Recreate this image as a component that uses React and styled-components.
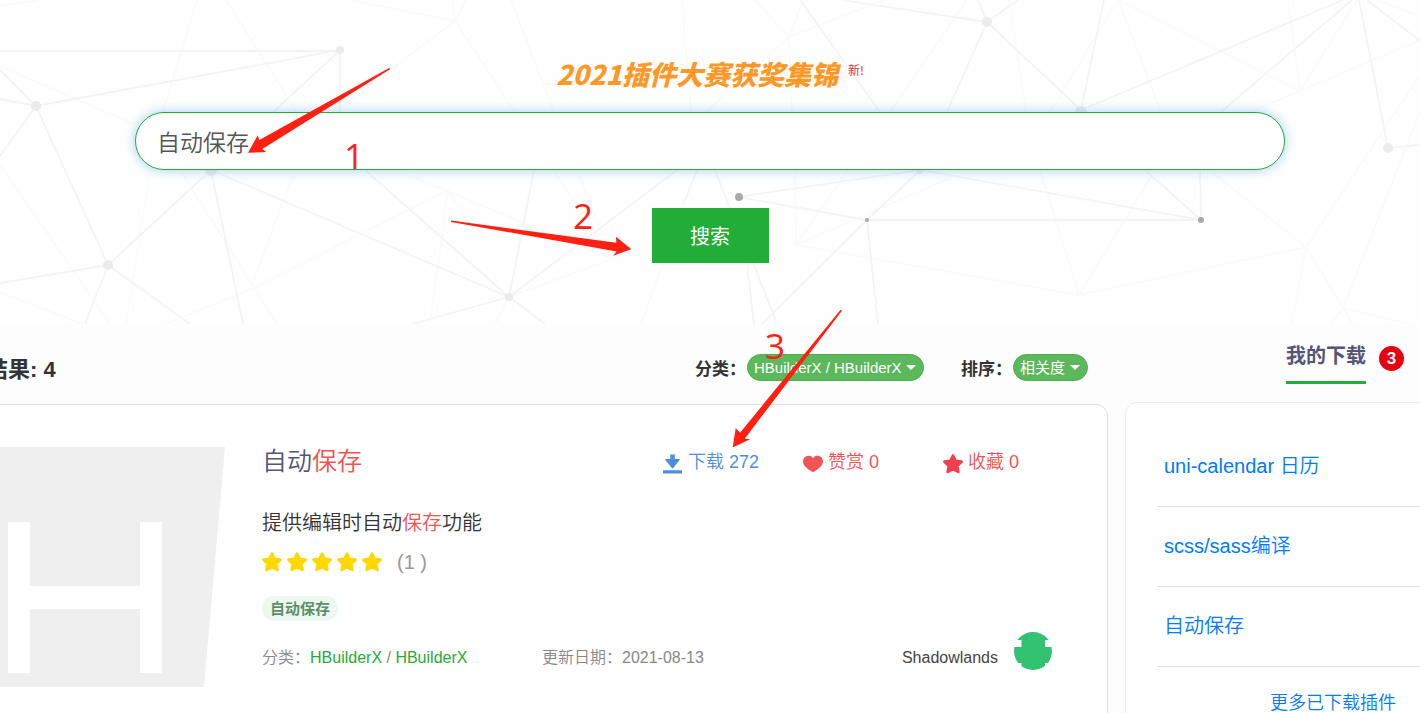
import { useState } from 'react'
import styled, { createGlobalStyle } from 'styled-components'


const GlobalStyle = createGlobalStyle`
  * {
    box-sizing: border-box;
  }

  body {
    margin: 0;
    background-color: #fdfdfd;
    color: #333333;
    font-family: "Liberation Sans", "Noto Sans CJK SC", sans-serif;
    font-size: 16px;
  }

  a {
    text-decoration: none;
  }
`

const Page = styled.div`
  position: relative;
  max-height: 100vh;
  overflow: hidden;
`

const Hero = styled.header`
  position: relative;
  display: flex;
  flex-direction: column;
  align-items: center;
  padding: 60px 0 61px;
  background-color: #fefefe;
`

const Network = styled.svg`
  position: absolute;
  inset: 0;
  width: 100%;
  height: 100%;
`

const Banner = styled.a`
  position: relative;
  display: flex;
  align-items: flex-start;
  gap: 10px;
  height: 32px;
  margin-bottom: 20px;
  color: #ff9826;
  font-family: "Noto Sans CJK SC", sans-serif;
  font-size: 27px;
  font-style: italic;
  font-weight: 900;
  line-height: 28px;
`

const NewMark = styled.span`
  color: #dc3545;
  font-size: 12px;
  font-style: normal;
  font-weight: 400;
  line-height: 20px;
`

const SearchForm = styled.form`
  position: relative;
  display: flex;
  flex-direction: column;
  align-items: center;
  gap: 38px;
  width: 81%;
`

const SearchInput = styled.input`
  width: 100%;
  height: 58px;
  padding: 0 21px;
  border: 1px solid #22ac38;
  border-radius: 29px;
  outline: none;
  background-color: #ffffff;
  box-shadow: 0 0 12px rgba(102, 175, 233, 0.6);
  color: #555555;
  font-family: inherit;
  font-size: 23px;
  font-weight: 350;
`

const SearchButton = styled.button`
  width: 117px;
  height: 55px;
  border: none;
  background-color: #22ac38;
  color: #ffffff;
  font-family: inherit;
  font-size: 20px;
  cursor: pointer;
`

const Content = styled.div`
  display: grid;
  grid-template-columns: minmax(0, 1fr) 310px;
  gap: 17px;
  margin: 0 -15px 0 -32px;
`

const Toolbar = styled.div`
  display: flex;
  align-items: center;
  gap: 37px;
  height: 80px;
  padding: 6px 20px 0 18px;
`

const ResultCount = styled.h2`
  flex: 1;
  margin: 0;
  font-size: 22px;
  font-weight: 700;
`

const Filter = styled.label`
  display: flex;
  align-items: center;
  gap: 1px;
  font-size: 17px;
  font-weight: 700;
`

const SelectBox = styled.span`
  position: relative;
  display: flex;
  align-items: center;
`

const Select = styled.select`
  height: 27px;
  padding: 0 21px 0 6px;
  border: 1px solid #4cae4c;
  border-radius: 14px;
  appearance: none;
  background-color: #5cb85c;
  color: #ffffff;
  font-family: inherit;
  font-size: 15px;
  cursor: pointer;
`

const Caret = styled.svg`
  position: absolute;
  right: 8px;
  pointer-events: none;
`

const Card = styled.article`
  display: flex;
  gap: 37px;
  padding: 42px 24px 42px 16px;
  border: 1px solid #dfdfdf;
  border-radius: 12px;
  background-color: #ffffff;
`

const Details = styled.div`
  flex: 1;
  min-width: 0;
`

const CardHead = styled.div`
  display: flex;
  justify-content: space-between;
  height: 26px;
`

const Title = styled.h3`
  margin: 0;
  color: #555577;
  font-size: 25px;
  font-weight: 350;
  line-height: 28px;
`

const Mark = styled.em`
  color: #f15353;
  font-style: normal;
`

const Stats = styled.div`
  display: grid;
  grid-template-columns: repeat(3, 140px);
`

const Stat = styled.a`
  display: flex;
  align-items: center;
  gap: 5px;
  height: 30px;
  color: ${props => props.$color};
  font-size: 18px;
  font-weight: 350;
  line-height: 30px;

  svg {
    margin-top: 4px;
  }
`

const Description = styled.p`
  margin: 36px 0 13px;
  font-size: 20px;
  font-weight: 350;
  line-height: 28px;
`

const Rating = styled.div`
  display: flex;
  align-items: center;
  gap: 5px;
  height: 24px;
  margin-bottom: 22px;
`

const RatingCount = styled.span`
  padding-left: 10px;
  color: #999999;
  font-size: 20px;
  font-weight: 350;
`

const Tag = styled.a`
  display: inline-block;
  padding: 0 8px;
  border-radius: 13px;
  background-color: #edf8f0;
  color: #5e8f6c;
  font-size: 15px;
  font-weight: 700;
  line-height: 25px;
  vertical-align: top;
`

const Meta = styled.div`
  display: flex;
  align-items: flex-end;
  margin-top: 11px;
  padding-right: 31px;
  color: #888888;
  font-weight: 350;
  line-height: 24px;
`

const Category = styled.span`
  width: 280px;

  a {
    color: #22ac38;
  }
`

const Author = styled.a`
  display: flex;
  align-items: flex-end;
  gap: 16px;
  margin-left: auto;
  color: #444444;
`

const SidebarHead = styled.div`
  display: flex;
  align-items: center;
  justify-content: flex-end;
  gap: 13px;
  height: 78px;
  padding: 8px 31px 18px 0;
`

const SidebarTitle = styled.h2`
  margin: 0;
  padding-bottom: 1px;
  border-bottom: 3px solid #22ac38;
  color: #555577;
  font-size: 20px;
  font-weight: 700;
  line-height: 48px;
`

const Badge = styled.span`
  width: 25px;
  border-radius: 50%;
  background-color: #e60012;
  color: #ffffff;
  font-size: 17px;
  font-weight: 700;
  line-height: 25px;
  text-align: center;
`

const SidebarCard = styled.div`
  padding: 24px 0 30px 31px;
  border: 1px solid #ebebeb;
  border-radius: 12px;
  background-color: #ffffff;
`

const DownloadList = styled.ul`
  margin: 0;
  padding: 0;
  list-style: none;
`

const DownloadItem = styled.li`
  padding-left: 7px;
  border-bottom: 1px solid #dfdfdf;
  font-size: 20px;
  font-weight: 350;
  line-height: 79px;

  a {
    color: #007bff;
  }
`

const MoreLink = styled.a`
  display: block;
  padding: 23px 38px 0 0;
  color: #007bff;
  font-size: 18px;
  font-weight: 350;
  line-height: 26px;
  text-align: right;
`

const Annotations = styled.svg`
  position: absolute;
  top: 0;
  left: 0;
  pointer-events: none;
  font-family: "Open Sans", sans-serif;
  font-size: 35px;
`


const STRONG_LINES = `
  M0 51H340 M36 106L340 50 M0 70L36 106L0 99 M36 106L0 156 M36 106L108 265
  M108 265L0 283 M108 265L85 324 M108 265L190 324 M108 265L211 170L340 50V140
  M365 170L509 297 M211 170L243 324 M211 170L509 297 M509 297L412 324
  M509 297L545 324 M509 297L534 170 M509 297L677 170 M800 0L880 112
  M842 0L987 22L978 0 M987 22L1018 0 M987 22L1081 110L1104 0 M987 22L947 112
  M1081 110L1343 0 M1352 0L1221 112 M1359 0L1388 148L1420 145 M1367 0L1420 41
  M697 170L682 208 M715 170L730 208 M738 197L920 170 M738 197L867 220H1201
  M867 220L920 170L1201 220L1145 170 M1201 220L1200 170 M867 220L762 324
  M867 220L878 324 M747 263L754 324 M753 263L777 324
`

const FAINT_LINES = `
  M0 6L38 0 M0 66L136 125 M197 0L163 112 M226 0L297 112 M350 0L455 21L452 0
  M466 0L455 21L340 108 M455 21L515 112 M0 165L110 324 M150 170L126 324
  M180 170L277 324 M295 170L250 290L448 190L430 324 M250 290L165 324
  M0 292L83 324 M400 172L612 259L577 170 M448 190L478 238 M553 170L612 259
  L509 297L495 324 M511 0L554 112 M682 0L691 112 M755 0L789 37L803 0
  M706 112L789 37L792 112 M789 37L884 0 M663 263L641 324 M795 170L796 245
  L950 272L1079 295 M848 170L796 245L950 178 M967 0L890 112 M1009 0L1026 112
  M1050 112L1118 0L1161 112 M1118 0L1300 91L1288 0 M1357 0L1300 91L1420 40
  M1300 91L1250 112 M1375 0L1420 16 M1420 75L1306 247L1212 172
  M1420 112L1343 308L1306 247L1079 295L1040 170 M1079 295L1152 175
  M1306 247L1292 324 M1331 324L1343 308L1352 324 M1343 308L1410 324
`

const NODES = [
  [36, 106, 5], [340, 50, 4], [108, 265, 5], [211, 170, 6], [509, 297, 4],
  [987, 22, 5], [1081, 112, 6], [920, 170, 4], [1388, 148, 5],
]

const DARK_NODES = [[739, 197, 4], [867, 220, 2], [1201, 220, 3]]

const downloads = ['uni-calendar 日历', 'scss/sass编译', '自动保存']


function NetworkBackground() {
  return (
    <Network viewBox="0 0 1420 324" preserveAspectRatio="xMidYMid slice" aria-hidden="true">
      <g fill="none" strokeWidth="1.8">
        <path d={FAINT_LINES} stroke="#fafafa" />
        <path d={STRONG_LINES} stroke="#f4f4f4" />
      </g>
      {NODES.map(([x, y, r]) => (
        <circle key={x} cx={x} cy={y} r={r} fill="#ebebeb" />
      ))}
      {DARK_NODES.map(([x, y, r]) => (
        <circle key={x} cx={x} cy={y} r={r} fill="#a9a9a9" />
      ))}
    </Network>
  )
}

function DownloadIcon() {
  return (
    <svg width="20" height="20" viewBox="0 0 20 20" fill="#4a90e2" aria-hidden="true">
      <path d="M7.2 0.6H11.8V5H16.2Q17.4 5 16.6 6L10.2 14Q9.5 14.8 8.8 14L2.4 6Q1.600 5 2.800 5H7.2Z" />
      <rect x="0" y="16.2" width="19" height="3.3" rx="0.5" />
    </svg>
  )
}

function HeartIcon() {
  return (
    <svg width="20" height="20" viewBox="0 0 20 20" fill="#f05555" aria-hidden="true">
      <path d="M10 4.2C8.4 1.7 5.8 1.5 4 2 1.4 2.7 0 4.9 0 7.5c0 4.5 5 7.5 9.2 10.3q.8.5 1.6 0C15 15 20 12 20 7.5 20 4.9 18.6 2.7 16 2c-1.8-.5-4.4-.3-6 2.2z" />
    </svg>
  )
}

function StarIcon({ color }) {
  return (
    <svg width="20" height="20" viewBox="0 0 20 20" aria-hidden="true">
      <path
        d="M10 1.8l2.5 5.1 5.9.8-4.3 4.1 1.1 6L10 15l-5.2 2.8 1.1-6L1.6 7.7l5.9-.8z"
        fill={color}
        stroke={color}
        strokeWidth="3"
        strokeLinejoin="round"
      />
    </svg>
  )
}

function Thumbnail() {
  return (
    <svg width="240" height="240" viewBox="0 0 240 240" aria-hidden="true">
      <path d="M0 0H240L219 240H0z" fill="#efefef" />
      <path d="M23 75H45V139H155V75H177V226H155V162H45V226H23z" fill="#ffffff" />
    </svg>
  )
}

function Avatar() {
  return (
    <svg width="38" height="38" viewBox="0 0 38 38" aria-hidden="true">
      <circle cx="19" cy="19" r="19" fill="#33c172" />
      <path d="M0 8H7.5V15H0z M31 8H38V15H31z M0 31H7.5V38H0z M31 31H38V38H31z" fill="#ffffff" />
    </svg>
  )
}

function FilterSelect({ label, option }) {
  return (
    <Filter>
      {label}
      <SelectBox>
        <Select>
          <option>{option}</option>
        </Select>
        <Caret width="10" height="5" viewBox="0 0 10 5" aria-hidden="true">
          <path d="M0 0H10L5 5z" fill="#ffffff" />
        </Caret>
      </SelectBox>
    </Filter>
  )
}

function ResultCard() {
  return (
    <Card>
      <Thumbnail />
      <Details>
        <CardHead>
          <Title>自动<Mark>保存</Mark></Title>
          <Stats>
            <Stat href="#download" $color="#4a90e2"><DownloadIcon />下载 272</Stat>
            <Stat href="#reward" $color="#f15353"><HeartIcon />赞赏 0</Stat>
            <Stat href="#favorite" $color="#f15353"><StarIcon color="#f0404f" />收藏 0</Stat>
          </Stats>
        </CardHead>
        <Description>提供编辑时自动<Mark>保存</Mark>功能</Description>
        <Rating>
          {[1, 2, 3, 4, 5].map(n => <StarIcon key={n} color="#ffd800" />)}
          <RatingCount>(1 )</RatingCount>
        </Rating>
        <Tag href="#tag">自动保存</Tag>
        <Meta>
          <Category>
            分类：<a href="#hx">HBuilderX</a> / <a href="#hx-plugin">HBuilderX</a>
          </Category>
          <span>更新日期：2021-08-13</span>
          <Author href="#author">Shadowlands<Avatar /></Author>
        </Meta>
      </Details>
    </Card>
  )
}

function App() {
  const [keyword, setKeyword] = useState('自动保存')

  return (
    <Page>
      <GlobalStyle />
      <Hero>
        <NetworkBackground />
        <Banner href="#contest">
          2021插件大赛获奖集锦
          <NewMark>新!</NewMark>
        </Banner>
        <SearchForm onSubmit={event => event.preventDefault()}>
          <SearchInput
            aria-label="搜索"
            value={keyword}
            onChange={event => setKeyword(event.target.value)}
          />
          <SearchButton type="submit">搜索</SearchButton>
        </SearchForm>
      </Hero>

      <Content>
        <main>
          <Toolbar>
            <ResultCount>结果: 4</ResultCount>
            <FilterSelect label="分类：" option="HBuilderX / HBuilderX" />
            <FilterSelect label="排序：" option="相关度" />
          </Toolbar>
          <ResultCard />
        </main>

        <aside>
          <SidebarHead>
            <SidebarTitle>我的下载</SidebarTitle>
            <Badge>3</Badge>
          </SidebarHead>
          <SidebarCard>
            <DownloadList>
              {downloads.map(name => (
                <DownloadItem key={name}><a href="#plugin">{name}</a></DownloadItem>
              ))}
            </DownloadList>
            <MoreLink href="#more">更多已下载插件</MoreLink>
          </SidebarCard>
        </aside>
      </Content>

      <Annotations width="860" height="460" viewBox="0 0 860 460" fill="#ff2012">
        <path d="M389.5 67.8L259.3 140L257.7 135.3L248 152.8L266.3 152L262.3 149L390 69.3z" />
        <path d="M451 220.5L616.3 242.7L616 236.7L631.3 249.3L613 255.7L616.7 251.6L451 221.9z" />
        <path d="M840.6 309.8L740 432.7L735.7 428L732.7 447.4L750 439.3L744.7 438.7L841.9 310.7z" />
        <text x="344" y="169">1</text>
        <text x="573" y="229">2</text>
        <text x="765" y="359">3</text>
      </Annotations>
    </Page>
  )
}

export default App
